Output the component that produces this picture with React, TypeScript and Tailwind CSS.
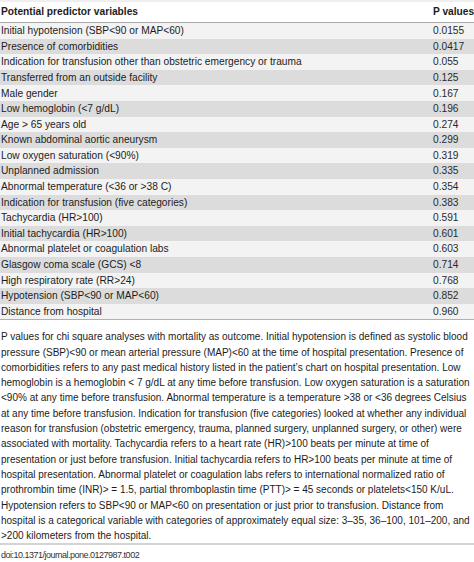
import React from "react";

const rows: [string, string][] = [
  ["Initial hypotension (SBP<90 or MAP<60)", "0.0155"],
  ["Presence of comorbidities", "0.0417"],
  ["Indication for transfusion other than obstetric emergency or trauma", "0.055"],
  ["Transferred from an outside facility", "0.125"],
  ["Male gender", "0.167"],
  ["Low hemoglobin (<7 g/dL)", "0.196"],
  ["Age > 65 years old", "0.274"],
  ["Known abdominal aortic aneurysm", "0.299"],
  ["Low oxygen saturation (<90%)", "0.319"],
  ["Unplanned admission", "0.335"],
  ["Abnormal temperature (<36 or >38 C)", "0.354"],
  ["Indication for transfusion (five categories)", "0.383"],
  ["Tachycardia (HR>100)", "0.591"],
  ["Initial tachycardia (HR>100)", "0.601"],
  ["Abnormal platelet or coagulation labs", "0.603"],
  ["Glasgow coma scale (GCS) <8", "0.714"],
  ["High respiratory rate (RR>24)", "0.768"],
  ["Hypotension (SBP<90 or MAP<60)", "0.852"],
  ["Distance from hospital", "0.960"],
];

const caption: string[] = [
  "P values for chi square analyses with mortality as outcome. Initial hypotension is defined as systolic blood",
  "pressure (SBP)<90 or mean arterial pressure (MAP)<60 at the time of hospital presentation. Presence of",
  "comorbidities refers to any past medical history listed in the patient\u2019s chart on hospital presentation. Low",
  "hemoglobin is a hemoglobin < 7 g/dL at any time before transfusion. Low oxygen saturation is a saturation",
  "<90% at any time before transfusion. Abnormal temperature is a temperature >38 or <36 degrees Celsius",
  "at any time before transfusion. Indication for transfusion (five categories) looked at whether any individual",
  "reason for transfusion (obstetric emergency, trauma, planned surgery, unplanned surgery, or other) were",
  "associated with mortality. Tachycardia refers to a heart rate (HR)>100 beats per minute at time of",
  "presentation or just before transfusion. Initial tachycardia refers to HR>100 beats per minute at time of",
  "hospital presentation. Abnormal platelet or coagulation labs refers to international normalized ratio of",
  "prothrombin time (INR)> = 1.5, partial thromboplastin time (PTT)> = 45 seconds or platelets<150 K/uL.",
  "Hypotension refers to SBP<90 or MAP<60 on presentation or just prior to transfusion. Distance from",
  "hospital is a categorical variable with categories of approximately equal size: 3\u201335, 36\u2013100, 101\u2013200, and",
  ">200 kilometers from the hospital.",
];

export default function App() {
  return (
    <div
      className="w-[474px] h-[562px] overflow-hidden bg-white text-[#1c1c1c]"
      style={{ fontFamily: '"Liberation Sans", Arial, sans-serif' }}
    >
      <div className="h-[2px] bg-[#efefef]" />
      <div className="h-[21px] flex items-center border-b border-[#a8a8a8] bg-white text-[10.2px] font-bold">
        <div className="flex-1 pl-[1px] whitespace-nowrap">Potential predictor variables</div>
        <div className="w-[41px] whitespace-nowrap">P values</div>
      </div>
      <div className="border-b border-[#b0b0b0]">
        {rows.map(([label, value], i) => (
          <div
            key={i}
            className={
              "h-[15.6px] flex items-center text-[10.2px] " +
              (i % 2 === 0 ? "bg-[#f3f3f3]" : "bg-[#dcdcdc]")
            }
          >
            <div className="flex-1 pl-[1px] whitespace-nowrap overflow-hidden">{label}</div>
            <div className="w-[41px] whitespace-nowrap text-[#2a2a2a]">{value}</div>
          </div>
        ))}
      </div>
      <div className="mt-[9px] pl-[1px] text-[10px] leading-[15.3px] border-b-2 border-[#d4d4d4]">
        {caption.map((line, i) => (
          <div key={i} className="whitespace-nowrap">
            {line}
          </div>
        ))}
      </div>
      <div className="pl-[1px] pt-[4px] text-[9px] leading-[12px] tracking-[-0.5px] text-[#333333] whitespace-nowrap">
        doi:10.1371/journal.pone.0127987.t002
      </div>
    </div>
  );
}
